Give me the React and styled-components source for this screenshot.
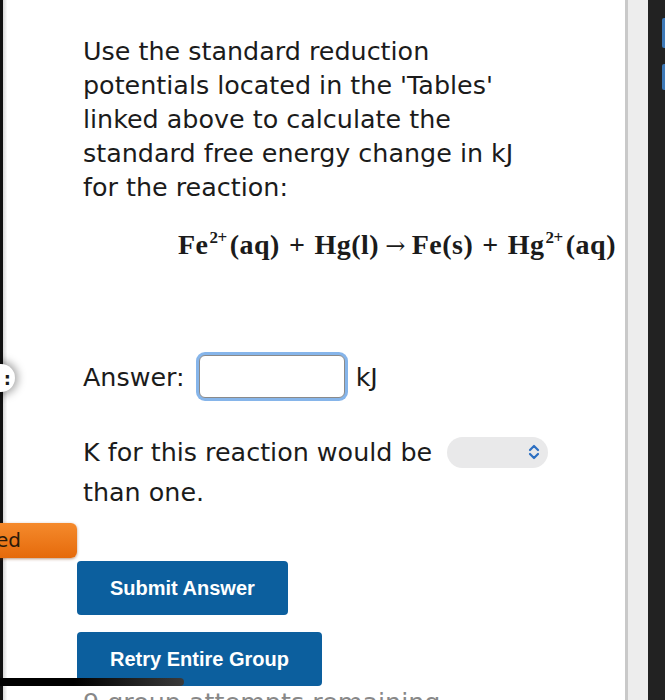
import React from 'react';
import styled, { createGlobalStyle } from 'styled-components';

const Global = createGlobalStyle`
  html, body { margin: 0; padding: 0; background: #fff; }
  body { width: 665px; height: 700px; overflow: hidden; font-family: "DejaVu Sans", Verdana, sans-serif; color: #1b1b1b; }
`;

const Page = styled.div`
  position: relative;
  display: flex;
  width: 665px;
  height: 700px;
  overflow: hidden;
`;

const LeftEdge = styled.div`
  width: 7px;
  flex: none;
  border-left: 3px solid #111;
  background: linear-gradient(to right, #d6d6d6, #fbfbfb);
  box-sizing: border-box;
`;

const Main = styled.main`
  flex: 1;
  padding: 34px 0 0 76px;
  box-sizing: border-box;
  min-width: 0;
`;

const Scroll = styled.div`
  flex: none;
  display: flex;
  width: 40px;
`;

const Track = styled.div`
  width: 23px;
  border-left: 3px solid #c9c9c9;
  background: #ededed;
  box-sizing: border-box;
`;

const Dark = styled.div`
  flex: 1;
  background: #222;
  display: flex;
  flex-direction: column;
  align-items: flex-end;
  padding-top: 18px;
  gap: 16px;
`;

const BlueMark = styled.span`
  width: 3px;
  height: ${p => p.h}px;
  background: #3d79b8;
  border-radius: 2px 0 0 2px;
`;

const Prompt = styled.p`
  margin: 0;
  font-size: 25.4px;
  line-height: 34px;
  width: 448px;
`;

const Equation = styled.div`
  margin: 23px 0 0 95px;
  font-family: "Liberation Serif", "Times New Roman", serif;
  font-weight: bold;
  font-size: 28px;
  line-height: 36px;
  white-space: nowrap;
  letter-spacing: 0.5px;
`;

const Sup = styled.sup`
  font-size: 17px;
  vertical-align: 11px;
  line-height: 0;
  margin: 0 3px 0 1px;
  letter-spacing: -0.5px;
`;

const Op = styled.span`
  display: inline-block;
  margin: 0 ${p => p.gap || 9}px;
  font-weight: ${p => (p.thin ? 'normal' : 'bold')};
  font-family: ${p => (p.thin ? '"DejaVu Serif", serif' : 'inherit')};
  font-size: ${p => (p.thin ? '24px' : 'inherit')};
`;

const AnswerRow = styled.div`
  display: flex;
  align-items: center;
  margin-top: 91px;
  font-size: 25.4px;
`;

const Input = styled.div`
  width: 144px;
  height: 41px;
  margin: 0 11px 0 14px;
  border: 1px solid #8a8a8a;
  border-radius: 6px;
  box-shadow: 0 0 0 3px #86b5ea;
  background: #fff;
`;

const KLine = styled.div`
  display: flex;
  align-items: center;
  margin-top: 34px;
  font-size: 25.4px;
  line-height: 40px;
`;

const Select = styled.div`
  width: 101px;
  height: 31px;
  margin-left: 15px;
  border-radius: 16px;
  background: #e9e9ea;
  display: flex;
  align-items: center;
  justify-content: flex-end;
  padding-right: 8px;
  box-sizing: border-box;
`;

const Line = styled.div`
  font-size: 25.4px;
  line-height: 40px;
`;

const Buttons = styled.div`
  display: flex;
  flex-direction: column;
  align-items: flex-start;
  gap: 17px;
  margin: 49px 0 0 -6px;
`;

const Button = styled.button`
  height: 54px;
  padding: 0 33px;
  border: none;
  border-radius: 4px;
  background: #0c5f9e;
  color: #fff;
  font-family: "Liberation Sans", Arial, sans-serif;
  font-weight: bold;
  font-size: 20px;
`;

const Remaining = styled.div`
  margin-top: 1px;
  font-size: 25.4px;
  line-height: 30px;
  color: #888;
  white-space: nowrap;
`;

const Tab = styled.div`
  position: absolute;
  left: -12px;
  top: 523px;
  width: 89px;
  height: 35px;
  box-sizing: border-box;
  padding-left: 8px;
  border-radius: 6px;
  background: linear-gradient(#f58a2c, #e56a0b);
  box-shadow: 0 1px 3px rgba(120,50,0,0.5);
  font-size: 20px;
  line-height: 35px;
  color: #2a1a0a;
`;

const Knob = styled.div`
  position: absolute;
  left: -13px;
  top: 364px;
  width: 28px;
  height: 28px;
  border-radius: 50%;
  background: #fff;
  box-shadow: 0 0 8px 3px rgba(0,0,0,0.35);
  display: flex;
  align-items: center;
  justify-content: flex-end;
  padding-right: 4px;
  box-sizing: border-box;
  font-weight: bold;
  font-size: 18px;
`;

const HomeBar = styled.div`
  position: absolute;
  left: 0;
  top: 678px;
  width: 184px;
  height: 8px;
  border-radius: 0 4px 4px 0;
  background: linear-gradient(to right, #000 40%, #3a3a3a);
`;

function Chevrons() {
  return (
    <svg width="12" height="16" viewBox="0 0 12 16">
      <path d="M2 6 L6 2 L10 6 M2 10 L6 14 L10 10" fill="none" stroke="#2c6fc2" strokeWidth="2.2" strokeLinecap="round" strokeLinejoin="round" />
    </svg>
  );
}

export default function App() {
  return (
    <Page>
      <Global />
      <LeftEdge />
      <Main>
        <Prompt>
          Use the standard reduction potentials located in the 'Tables' linked above to calculate the standard free energy change in kJ for the reaction:
        </Prompt>
        <Equation>
          Fe<Sup>2+</Sup>(aq)<Op>+</Op>Hg(l)<Op thin gap={6}>→</Op>Fe(s)<Op>+</Op>Hg<Sup>2+</Sup>(aq)
        </Equation>
        <AnswerRow>
          Answer:<Input />kJ
        </AnswerRow>
        <KLine>
          K for this reaction would be
          <Select><Chevrons /></Select>
        </KLine>
        <Line>than one.</Line>
        <Buttons>
          <Button>Submit Answer</Button>
          <Button>Retry Entire Group</Button>
        </Buttons>
        <Remaining>9 group attempts remaining</Remaining>
      </Main>
      <Scroll>
        <Track />
        <Dark>
          <BlueMark h={30} />
          <BlueMark h={26} />
        </Dark>
      </Scroll>
      <Knob>:</Knob>
      <Tab>ed</Tab>
      <HomeBar />
    </Page>
  );
}
